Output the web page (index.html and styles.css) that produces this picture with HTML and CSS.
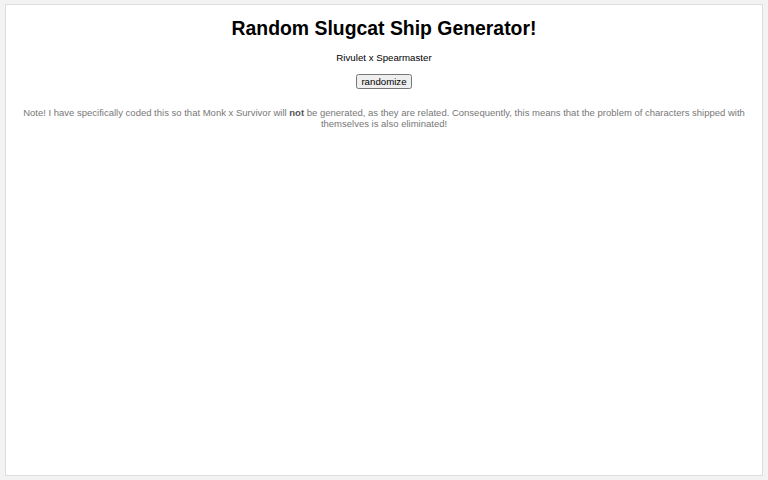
FILE: index.html
```html
<!DOCTYPE html>
<html lang="en">

<head>
    <meta charset="UTF-8" />
    <meta name="viewport" content="width=device-width, initial-scale=1.0" />
    <title>Random Slugcat Ship Generator!</title>
    <link rel="stylesheet" href="styles.css">
</head>

<body>
    <div class="container">
        <h1 class="title">Random Slugcat Ship Generator!</h1>
        <p class="ship" id="ship">Rivulet x Spearmaster</p>
        <button class="btn" id="randomize">randomize</button>
        <p class="note">
            Note! I have specifically coded this so that Monk x Survivor will <b>not</b> be generated, as they are
            related. Consequently, this means that the problem of characters shipped with themselves is also
            eliminated!
        </p>
    </div>
</body>

</html>
```
FILE: styles.css
```css
html {
    box-sizing: border-box;
    height: 100%;
    font-family: "Liberation Sans", Arial, sans-serif;
}

*,
*:before,
*:after {
    box-sizing: inherit;
}

body {
    margin: 0;
    padding: 4px 5px 4px 5px;
    height: 100%;
    background-color: #f3f3f3;
}

.container {
    height: 100%;
    background-color: #fff;
    border: 1px solid #ddd;
    text-align: center;
    padding: 12px 14px;
}

.title {
    margin: 0;
    font-size: 19.4px;
    color: #000;
}

.ship {
    font-size: 9.7px;
    margin: 12px 0 8px;
}

.btn {
    font-family: "Liberation Sans", Arial, sans-serif;
    font-size: 9.7px;
    line-height: 11px;
    padding: 0 3px;
}

.note {
    font-size: 9.5px;
    color: #777;
    margin: 18px 0 0;
    line-height: 11px;
}

.note b {
    color: #555;
}
```
